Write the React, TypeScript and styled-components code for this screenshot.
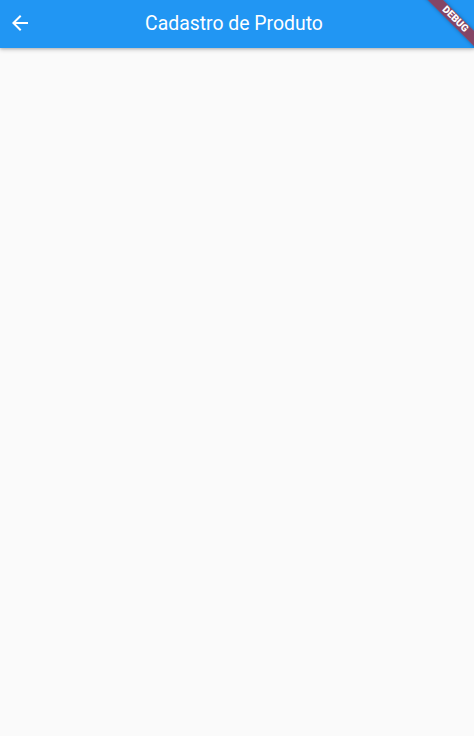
import styled, { createGlobalStyle } from "styled-components";

const GlobalStyle = createGlobalStyle`
  html, body {
    margin: 0;
    padding: 0;
    background: #ffffff;
    font-family: Roboto, "Noto Sans", "Liberation Sans", sans-serif;
  }
  #root {
    height: 100vh;
  }
`;

const Screen = styled.div`
  position: relative;
  height: 736px;
  display: flex;
  flex-direction: column;
  background: #fafafa;
  overflow: hidden;
`;

const AppBar = styled.header`
  height: 48px;
  flex-shrink: 0;
  display: grid;
  grid-template-columns: 40px 1fr 40px;
  align-items: center;
  background: #2196f3;
  color: #ffffff;
  box-shadow: 0 2px 4px rgba(0, 0, 0, 0.18), 0 1px 2px rgba(0, 0, 0, 0.12);
  z-index: 1;
`;

const BackButton = styled.button`
  width: 40px;
  height: 40px;
  margin-top: -2px;
  display: flex;
  align-items: center;
  justify-content: center;
  padding: 0;
  border: none;
  background: transparent;
  color: inherit;
  cursor: pointer;
`;

const Title = styled.h1`
  margin: 0 0 0 -6px;
  text-align: center;
  font-size: 19.4px;
  font-weight: 400;
  line-height: 24px;
`;

const Body = styled.main`
  flex: 1;
`;

// Flutter's debug banner, drawn over the top-right corner
const BannerClip = styled.div`
  position: absolute;
  top: 0;
  right: 0;
  width: 60px;
  height: 60px;
  overflow: hidden;
  pointer-events: none;
  z-index: 2;
`;

const BannerBand = styled.div`
  position: absolute;
  left: -9.4px;
  top: 14.1px;
  width: 100px;
  height: 10.8px;
  transform: rotate(45deg);
  background: rgba(183, 28, 28, 0.66);
  box-shadow: 0 0 4px rgba(0, 0, 0, 0.3);
  display: flex;
  align-items: center;
  justify-content: center;
  color: #ffffff;
  font-size: 10px;
  font-weight: 900;
  line-height: 1;
`;

function ArrowBack() {
  return (
    <svg width="24" height="24" viewBox="0 0 24 24" fill="currentColor">
      <path d="M20 11H7.83l5.59-5.59L12 4l-8 8 8 8 1.41-1.41L7.83 13H20v-2z" />
    </svg>
  );
}

export default function App() {
  return (
    <>
      <GlobalStyle />
      <Screen>
        <AppBar>
          <BackButton aria-label="Voltar">
            <ArrowBack />
          </BackButton>
          <Title>Cadastro de Produto</Title>
          <span />
        </AppBar>
        <Body />
        <BannerClip>
          <BannerBand>DEBUG</BannerBand>
        </BannerClip>
      </Screen>
    </>
  );
}
